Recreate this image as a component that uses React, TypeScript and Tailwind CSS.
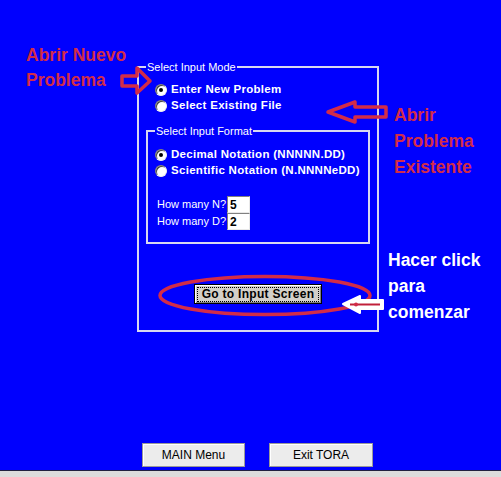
import React from "react";

const sans = "font-['Liberation_Sans',Arial,sans-serif]";

function Radio({ checked, label }: { checked?: boolean; label: string }) {
  return (
    <div className="flex h-[16px] items-center gap-[4px]">
      <span className="relative flex h-[12px] w-[12px] items-center justify-center rounded-full border border-t-[#7a7a7a] border-l-[#7a7a7a] border-b-[#f0f0f0] border-r-[#f0f0f0] bg-white shadow-[inset_1px_1px_0_#404040]">
        {checked && <span className="h-[4px] w-[4px] rounded-full bg-black" />}
      </span>
      <span className="text-[11.5px] font-bold leading-none tracking-[0.3px] text-white">{label}</span>
    </div>
  );
}

function NumField({ label, value }: { label: string; value: string }) {
  return (
    <div className="flex h-[17px] items-center">
      <span className="w-[70px] text-[11px] leading-none text-white">{label}</span>
      <span className="flex h-[17px] w-[23px] items-center border border-t-[#808080] border-l-[#808080] border-b-[#e8e8e8] border-r-[#e8e8e8] bg-white pl-[2px] text-[12px] font-bold text-black">
        {value}
      </span>
    </div>
  );
}

export default function App() {
  return (
    <div className={`relative flex h-[477px] w-[501px] flex-col overflow-hidden bg-[#0000fe] ${sans}`}>
      {/* main panel */}
      <fieldset className="ml-[137px] mt-[60px] h-[272px] w-[240px] border-2 border-[#d8d8f0] px-[7px] pt-[8px] pb-0">
        <legend className="ml-0 px-[1px] text-[11px] leading-[14px] text-white">Select Input Mode</legend>
        <div className="ml-[9px] flex flex-col">
          <Radio checked label="Enter New Problem" />
          <Radio label="Select Existing File" />
        </div>

        <fieldset className="mt-[10px] h-[120px] w-[224px] border-2 border-[#d8d8f0] px-[7px] pt-[9px]">
          <legend className="ml-0 px-[1px] text-[11px] leading-[14px] text-white">Select Input Format</legend>
          <div className="flex flex-col">
            <Radio checked label="Decimal Notation (NNNNN.DD)" />
            <Radio label="Scientific Notation (N.NNNNeDD)" />
          </div>
          <div className="mt-[17px] ml-[2px] flex flex-col">
            <NumField label="How many N?" value="5" />
            <NumField label="How many D?" value="2" />
          </div>
        </fieldset>

        <div className="mt-[40px] flex justify-center">
          <button className="flex h-[20px] w-[128px] items-center justify-center border border-black bg-[#d4d0c8] p-[1px] shadow-[inset_1px_1px_0_#ffffff,inset_-1px_-1px_0_#808080]">
            <span className="border border-dotted border-black px-[4px] text-[12px] font-bold leading-[13px] tracking-[0.3px] text-black">
              Go to Input Screen
            </span>
          </button>
        </div>
      </fieldset>

      {/* bottom buttons */}
      <div className="mt-auto mb-[3px] ml-[142px] flex gap-[24px]">
        <button className="h-[24px] w-[103px] border border-[#9a9a9a] bg-[#ececec] text-[12px] text-black shadow-[inset_1px_1px_0_#ffffff]">
          MAIN Menu
        </button>
        <button className="h-[24px] w-[104px] border border-[#9a9a9a] bg-[#ececec] text-[12px] text-black shadow-[inset_1px_1px_0_#ffffff]">
          Exit TORA
        </button>
      </div>
      <div className="h-[7px] border-t border-[#202040] bg-[#dcdcdc]" />

      {/* annotations */}
      <div className="absolute left-[26px] top-[43px] text-[17.5px] font-bold leading-[25px] text-[#d22c48]">
        <div>Abrir Nuevo</div>
        <div>Problema</div>
      </div>
      <div className="absolute left-[394px] top-[102px] text-[17.5px] font-bold leading-[26px] text-[#d22c48]">
        <div>Abrir</div>
        <div>Problema</div>
        <div>Existente</div>
      </div>
      <div className="absolute left-[388px] top-[247px] text-[17.5px] font-bold leading-[26px] text-white">
        <div>Hacer click</div>
        <div>para</div>
        <div>comenzar</div>
      </div>

      <svg className="pointer-events-none absolute left-0 top-0" width="501" height="477" viewBox="0 0 501 477">
        <path d="M122 76 L137 76 L137 68 L150 81 L137 93 L137 86 L122 86 Z" fill="none" stroke="#d22c48" strokeWidth="3.5" strokeLinejoin="round" />
        <path d="M328 112 L355 102 L355 107 L386 107 L386 117 L355 117 L355 122 Z" fill="none" stroke="#d22c48" strokeWidth="3.5" strokeLinejoin="round" />
        <ellipse cx="265" cy="295.5" rx="105" ry="19" fill="none" stroke="#d22c48" strokeWidth="3.5" />
        <path d="M343 304 L360 296 L360 300 L383 300 L383 309 L360 309 L360 313 Z" fill="#ffffff" stroke="#ffffff" strokeWidth="2" strokeLinejoin="round" />
        <line x1="350" y1="304.5" x2="380" y2="304.5" stroke="#c0203a" strokeWidth="2" />
        <circle cx="356" cy="304.5" r="2" fill="#d22c48" />
      </svg>
    </div>
  );
}
